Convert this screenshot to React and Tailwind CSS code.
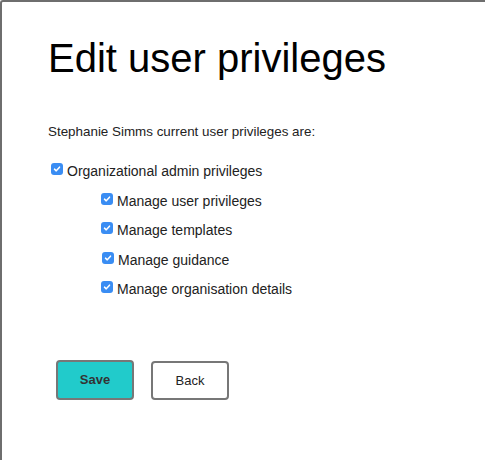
import React, { useState } from "react";

const subPrivileges = [
  { id: "users", label: "Manage user privileges" },
  { id: "templates", label: "Manage templates" },
  { id: "guidance", label: "Manage guidance", nudge: true },
  { id: "org", label: "Manage organisation details" },
];

function Checkbox({ checked, onChange }) {
  return (
    <button
      type="button"
      onClick={onChange}
      className={`mt-[2px] flex h-[12px] w-[12px] shrink-0 items-center justify-center rounded-[3px] ${
        checked ? "bg-[#3a8df3]" : "border border-[#9a9a9a] bg-white"
      }`}
    >
      {checked && (
        <svg viewBox="0 0 12 12" className="h-[10px] w-[10px]">
          <path
            d="M3 6.2 L5.1 8.2 L9 3.8"
            fill="none"
            stroke="white"
            strokeWidth="1.8"
            strokeLinecap="round"
            strokeLinejoin="round"
          />
        </svg>
      )}
    </button>
  );
}

export default function App() {
  const [admin, setAdmin] = useState(true);
  const [privs, setPrivs] = useState({
    users: true,
    templates: true,
    guidance: true,
    org: true,
  });

  const toggle = (id) => setPrivs({ ...privs, [id]: !privs[id] });

  return (
    <div
      className="h-[460px] w-full overflow-hidden rounded-tl-[3px] border-l-2 border-t-2 border-[#6e6e6e] bg-white pl-[46px] text-[#222]"
      style={{ fontFamily: '"Liberation Sans", Arial, sans-serif' }}
    >
      <h1 className="mt-[36px] text-[40px] leading-none text-black">
        Edit user privileges
      </h1>

      <p className="mt-[44px] text-[13.4px] leading-[20px]">
        Stephanie Simms current user privileges are:
      </p>

      {/* Privileges */}
      <div className="mt-[19px] flex flex-col gap-[9.5px]">
        <label className="flex h-[20px] items-start gap-[4px] pl-[3px] text-[14px] leading-[20px]">
          <Checkbox checked={admin} onChange={() => setAdmin(!admin)} />
          <span>Organizational admin privileges</span>
        </label>

        {subPrivileges.map((p) => (
          <label
            key={p.id}
            className={`flex h-[20px] items-start gap-[4px] text-[14px] leading-[20px] ${
              p.nudge ? "pl-[54px]" : "pl-[53px]"
            }`}
          >
            <Checkbox checked={privs[p.id]} onChange={() => toggle(p.id)} />
            <span>{p.label}</span>
          </label>
        ))}
      </div>

      {/* Buttons */}
      <div className="mt-[61px] flex gap-[17px] pl-[8px]">
        <button className="h-[40px] w-[78px] rounded-[4px] border-2 border-[#777] bg-[#21cbcb] text-[13px] font-bold text-[#333]">
          Save
        </button>
        <button className="mt-[1px] h-[39px] w-[78px] rounded-[4px] border-2 border-[#777] bg-white text-[13px] text-[#222]">
          Back
        </button>
      </div>
    </div>
  );
}
